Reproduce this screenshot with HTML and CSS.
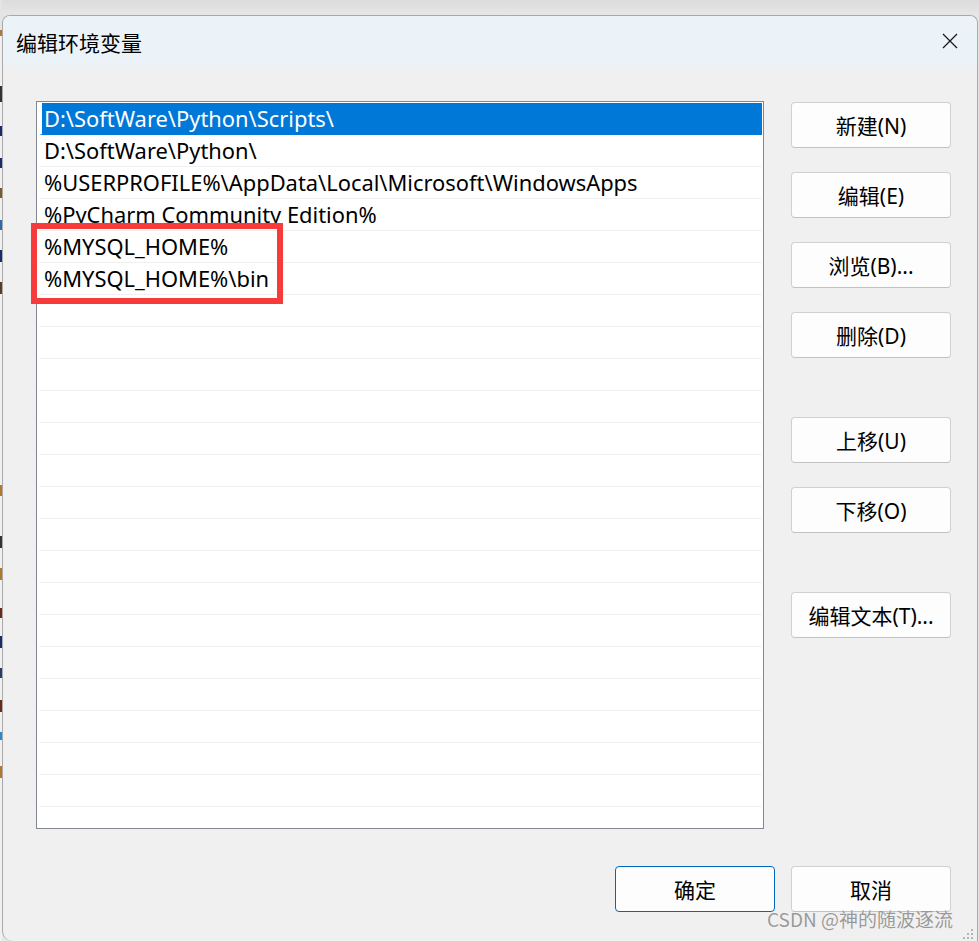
FILE: index.html
```html
<!DOCTYPE html>
<html lang="zh-CN">
<head>
    <meta charset="UTF-8">
    <title>编辑环境变量</title>
    <link rel="stylesheet" href="styles.css">
</head>
<body>
    <div class="behind"></div>

    <div class="window">
        <div class="titlebar">
            <span class="title">编辑环境变量</span>
            <svg class="close" width="16" height="16" viewBox="0 0 16 16">
                <path d="M1 1 L15 15 M15 1 L1 15" stroke="#1a1a1a" stroke-width="1.3" fill="none"/>
            </svg>
        </div>

        <div class="content">
            <div class="main">
                <div class="list">
                    <div class="row selected">D:\SoftWare\Python\Scripts\</div>
                    <div class="row">D:\SoftWare\Python\</div>
                    <div class="row">%USERPROFILE%\AppData\Local\Microsoft\WindowsApps</div>
                    <div class="row">%PyCharm Community Edition%</div>
                    <div class="row">%MYSQL_HOME%</div>
                    <div class="row">%MYSQL_HOME%\bin</div>
                    <div class="row"></div>
                    <div class="row"></div>
                    <div class="row"></div>
                    <div class="row"></div>
                    <div class="row"></div>
                    <div class="row"></div>
                    <div class="row"></div>
                    <div class="row"></div>
                    <div class="row"></div>
                    <div class="row"></div>
                    <div class="row"></div>
                    <div class="row"></div>
                    <div class="row"></div>
                    <div class="row"></div>
                    <div class="row"></div>
                    <div class="row"></div>
                    <div class="row"></div>
                    <div class="highlight"></div>
                </div>

                <div class="side">
                    <button class="btn">新建(N)</button>
                    <button class="btn">编辑(E)</button>
                    <button class="btn">浏览(B)...</button>
                    <button class="btn">删除(D)</button>
                    <button class="btn group">上移(U)</button>
                    <button class="btn">下移(O)</button>
                    <button class="btn group">编辑文本(T)...</button>
                </div>
            </div>

            <div class="footer">
                <button class="btn default">确定</button>
                <button class="btn">取消</button>
            </div>
        </div>

        <svg class="grip" width="14" height="14" viewBox="0 0 14 14">
            <g fill="#b4b4b4">
                <rect x="10" y="2" width="2" height="2"/>
                <rect x="6" y="6" width="2" height="2"/>
                <rect x="10" y="6" width="2" height="2"/>
                <rect x="2" y="10" width="2" height="2"/>
                <rect x="6" y="10" width="2" height="2"/>
                <rect x="10" y="10" width="2" height="2"/>
            </g>
        </svg>
    </div>

    <div class="watermark">CSDN @神的随波逐流</div>
</body>
</html>
```

FILE: styles.css
```css
body {
    margin: 0;
    width: 979px;
    height: 941px;
    overflow: hidden;
    background: linear-gradient(#dcdcdc, #e6e6e6 15px);
    display: flex;
    align-items: flex-start;
    position: relative;
    font-family: "Noto Sans", "Noto Sans CJK SC", sans-serif;
    color: #000;
}
.behind {
    width: 2px;
    height: 941px;
    flex: none;
    background: linear-gradient(
        #e4e4e4 0, #e4e4e4 30px, #b07a2a 30px, #b07a2a 36px,
        #f0f0f0 36px, #f0f0f0 86px, #333 86px, #333 102px,
        #f0f0f0 102px, #f0f0f0 126px, #1b2a6b 126px, #1b2a6b 136px,
        #f0f0f0 136px, #f0f0f0 158px, #1b2a6b 158px, #1b2a6b 168px,
        #f0f0f0 168px, #f0f0f0 188px, #7a5a2a 188px, #7a5a2a 198px,
        #f0f0f0 198px, #f0f0f0 220px, #2a6ab0 220px, #2a6ab0 230px,
        #f0f0f0 230px, #f0f0f0 250px, #1b2a6b 250px, #1b2a6b 262px,
        #f0f0f0 262px, #f0f0f0 282px, #5a3a2a 282px, #5a3a2a 294px,
        #f0f0f0 294px, #f0f0f0 485px, #b07a2a 485px, #b07a2a 496px,
        #f0f0f0 496px, #f0f0f0 536px, #333 536px, #333 548px,
        #f0f0f0 548px, #f0f0f0 568px, #b07a2a 568px, #b07a2a 580px,
        #f0f0f0 580px, #f0f0f0 608px, #6a2a1a 608px, #6a2a1a 618px,
        #f0f0f0 618px, #f0f0f0 636px, #1b2a6b 636px, #1b2a6b 648px,
        #f0f0f0 648px, #f0f0f0 668px, #2a3a6b 668px, #2a3a6b 678px,
        #f0f0f0 678px, #f0f0f0 700px, #6a2a1a 700px, #6a2a1a 712px,
        #f0f0f0 712px, #f0f0f0 732px, #2a8ad0 732px, #2a8ad0 740px,
        #f0f0f0 740px, #f0f0f0 766px, #b07a2a 766px, #b07a2a 778px,
        #f0f0f0 778px
    );
}
.window {
    margin-top: 15px;
    width: 974px;
    height: 925px;
    flex: none;
    border: 1px solid #a9a9a9;
    border-bottom: none;
    border-radius: 8px 8px 0 10px;
    background: #f0f0f0;
    overflow: hidden;
    position: relative;
}
.titlebar {
    height: 49px;
    background: #ebf3f9;
    display: flex;
    align-items: center;
    padding: 0 19px 0 13px;
}
.title {
    flex: 1;
    font-size: 21px;
    font-family: "Noto Sans CJK SC", sans-serif;
    padding-top: 3px;
}
.close {
    display: block;
}
.content {
    padding: 36px 0 0 33px;
}
.main {
    display: grid;
    grid-template-columns: 728px 160px;
    column-gap: 27px;
}
.list {
    height: 725px;
    border: 1px solid #828790;
    background: #fff;
    padding: 1px 1px 0;
    position: relative;
}
.row {
    height: 31px;
    line-height: 31px;
    border-bottom: 1px solid #f0f0f0;
    margin-left: 1px;
    padding-left: 5px;
    font-size: 21.9px;
    white-space: nowrap;
    overflow: hidden;
}
.row.selected {
    background: #0078d7;
    border-bottom-color: #0078d7;
    border-left: 3px solid #fff;
    padding-left: 2px;
    color: #fff;
}
.highlight {
    position: absolute;
    left: -6px;
    top: 121px;
    width: 240px;
    height: 69px;
    border: 6px solid #f73b3b;
}
.side {
    display: flex;
    flex-direction: column;
    gap: 24px;
    padding-top: 1px;
}
.side .group {
    margin-top: 35px;
}
.btn {
    width: 160px;
    height: 46px;
    background: #fdfdfd;
    border: 1px solid #d0d0d0;
    border-bottom-color: #c2c2c2;
    border-radius: 4px;
    font-family: "Noto Sans", "Noto Sans CJK SC", sans-serif;
    font-size: 21px;
    color: #000;
    padding: 0;
}
.btn.default {
    border: 1px solid #0067c0;
}
.footer {
    margin-top: 37px;
    display: flex;
    justify-content: flex-end;
    gap: 16px;
    padding-right: 26px;
}
.grip {
    position: absolute;
    right: 2px;
    bottom: 0;
}
.watermark {
    position: absolute;
    left: 767px;
    top: 905px;
    font-family: "Noto Sans CJK SC", sans-serif;
    font-size: 19px;
    color: #999;
    text-shadow: 0 0 1px #fff;
    white-space: nowrap;
}
```
